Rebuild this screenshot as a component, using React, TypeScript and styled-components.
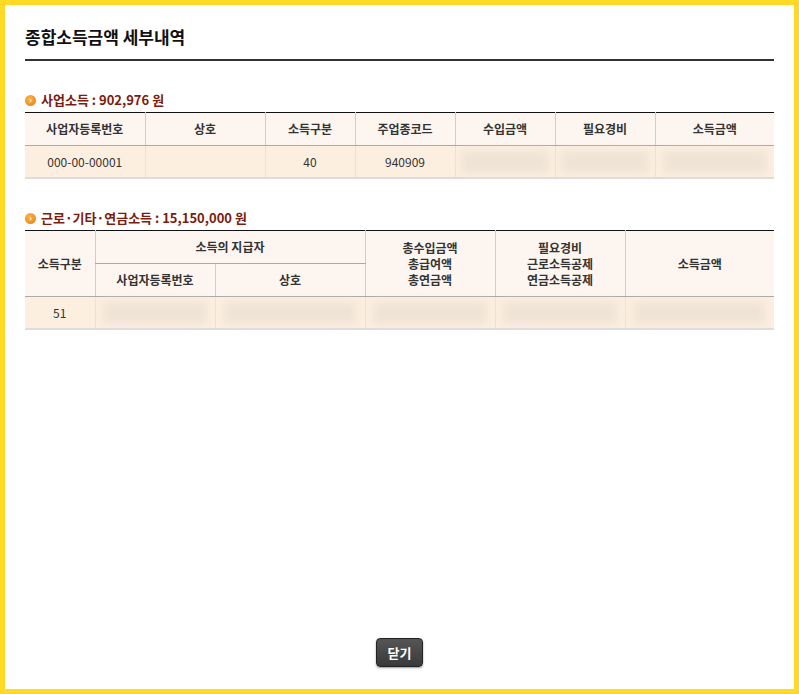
import React from "react";
import styled, { createGlobalStyle } from "styled-components";

const Global = createGlobalStyle`
  html, body { margin: 0; padding: 0; background: #fff; }
  body { font-family: "Noto Sans CJK KR", "Noto Sans", sans-serif; color: #333; }
`;

const Frame = styled.div`
  box-sizing: border-box;
  width: 799px;
  height: 694px;
  border: 5px solid #fed925;
  padding: 0 20px;
  display: flex;
  flex-direction: column;
  background: #fff;
`;

const Title = styled.h1`
  margin: 0;
  padding: 19px 0 9px;
  font-size: 17px;
  font-weight: 700;
  color: #111;
  line-height: 26px;
  border-bottom: 2px solid #333;
`;

const SectionTitle = styled.h2<{ $top: number }>`
  margin: ${(p) => p.$top}px 0 4px;
  display: flex;
  align-items: center;
  gap: 5px;
  font-size: 13px;
  font-weight: 700;
  color: #7b1c0e;
  line-height: 16px;
`;

const Bullet = styled.span`
  width: 11px;
  height: 11px;
  border-radius: 50%;
  background: radial-gradient(circle at 40% 35%, #fbb347, #e87c10);
  display: inline-flex;
  align-items: center;
  justify-content: center;
  color: #fff;
  font-size: 8px;
  line-height: 1;
`;

const Table = styled.table`
  width: 100%;
  border-collapse: collapse;
  table-layout: fixed;
  border-top: 1px solid #111;
  border-bottom: 2px solid #ddd;
  font-size: 12px;
`;

const Th = styled.th`
  background: #fdf5ef;
  color: #333;
  font-weight: 700;
  height: 32px;
  padding: 0;
  border-left: 1px solid #d9cbc0;
  border-bottom: 1px solid #aaa;
  line-height: 16px;
  &:first-child { border-left: none; }
`;

const Td = styled.td`
  background: #fcefe0;
  height: 31px;
  padding: 0;
  text-align: center;
  border-left: 1px solid #e0e4ea;
  color: #333;
  &:first-child { border-left: none; }
`;

const Blur = styled.div`
  height: 22px;
  margin: 0 auto;
  width: 88%;
  background: #efe3d6;
  filter: blur(4px);
`;

const Spacer = styled.div`
  flex: 1;
`;

const Footer = styled.div`
  display: flex;
  justify-content: center;
  padding-bottom: 22px;
`;

const Button = styled.button`
  width: 47px;
  height: 29px;
  border: 1px solid #222;
  border-radius: 4px;
  background: linear-gradient(#555, #3a3a3a);
  color: #fff;
  font-family: inherit;
  font-size: 13px;
  font-weight: 700;
  box-shadow: 0 1px 2px rgba(0, 0, 0, 0.4);
`;

export default function App() {
  return (
    <>
      <Global />
      <Frame>
        <Title>종합소득금액 세부내역</Title>
        <SectionTitle $top={31}>
          <Bullet>›</Bullet>사업소득 : 902,976 원
        </SectionTitle>
        <Table>
          <colgroup>
            <col style={{ width: 120 }} />
            <col style={{ width: 120 }} />
            <col style={{ width: 90 }} />
            <col style={{ width: 100 }} />
            <col style={{ width: 100 }} />
            <col style={{ width: 100 }} />
            <col />
          </colgroup>
          <thead>
            <tr>
              <Th>사업자등록번호</Th>
              <Th>상호</Th>
              <Th>소득구분</Th>
              <Th>주업종코드</Th>
              <Th>수입금액</Th>
              <Th>필요경비</Th>
              <Th>소득금액</Th>
            </tr>
          </thead>
          <tbody>
            <tr>
              <Td>000-00-00001</Td>
              <Td></Td>
              <Td>40</Td>
              <Td>940909</Td>
              <Td><Blur /></Td>
              <Td><Blur /></Td>
              <Td><Blur /></Td>
            </tr>
          </tbody>
        </Table>
        <SectionTitle $top={31}>
          <Bullet>›</Bullet>근로·기타·연금소득 : 15,150,000 원
        </SectionTitle>
        <Table>
          <colgroup>
            <col style={{ width: 70 }} />
            <col style={{ width: 120 }} />
            <col style={{ width: 150 }} />
            <col style={{ width: 130 }} />
            <col style={{ width: 130 }} />
            <col />
          </colgroup>
          <thead>
            <tr>
              <Th rowSpan={2}>소득구분</Th>
              <Th colSpan={2}>소득의 지급자</Th>
              <Th rowSpan={2}>총수입금액<br />총급여액<br />총연금액</Th>
              <Th rowSpan={2}>필요경비<br />근로소득공제<br />연금소득공제</Th>
              <Th rowSpan={2}>소득금액</Th>
            </tr>
            <tr>
              <Th style={{ borderLeft: "1px solid #d9cbc0" }}>사업자등록번호</Th>
              <Th>상호</Th>
            </tr>
          </thead>
          <tbody>
            <tr>
              <Td>51</Td>
              <Td><Blur /></Td>
              <Td><Blur /></Td>
              <Td><Blur /></Td>
              <Td><Blur /></Td>
              <Td><Blur /></Td>
            </tr>
          </tbody>
        </Table>
        <Spacer />
        <Footer>
          <Button>닫기</Button>
        </Footer>
      </Frame>
    </>
  );
}
